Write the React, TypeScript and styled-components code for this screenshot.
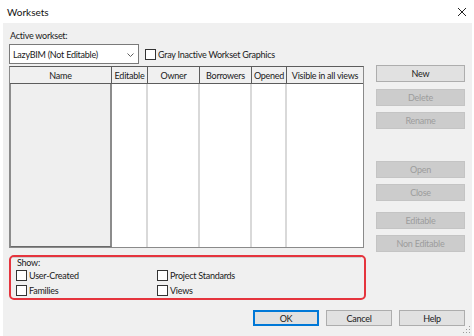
import styled, { createGlobalStyle } from "styled-components";

const GlobalStyle = createGlobalStyle`
  html, body {
    margin: 0;
    padding: 0;
    background: #ffffff;
  }
  body {
    font-family: Lato, "Noto Sans", sans-serif;
    font-size: 9px;
    letter-spacing: -0.25px;
    color: #1a1a1a;
  }
`;

const columns = [
  { title: "Name", width: 102 },
  { title: "Editable", width: 36 },
  { title: "Owner", width: 52 },
  { title: "Borrowers", width: 52 },
  { title: "Opened", width: 35 },
  { title: "Visible in all views", width: 76 },
];

const sideButtons = [
  { label: "New", disabled: false, space: 0 },
  { label: "Delete", disabled: true, space: 7 },
  { label: "Rename", disabled: true, space: 6 },
  { label: "Open", disabled: true, space: 32 },
  { label: "Close", disabled: true, space: 6 },
  { label: "Editable", disabled: true, space: 11 },
  { label: "Non Editable", disabled: true, space: 6 },
];

export default function App() {
  return (
    <>
      <GlobalStyle />
      <Window>
        <TitleBar>
          <Title>Worksets</Title>
          <svg width="10" height="10" viewBox="0 0 10 10">
            <path d="M1 1 L9 9 M9 1 L1 9" stroke="#222" strokeWidth="1" fill="none" />
          </svg>
        </TitleBar>
        <Body>
          <Top>
            <LeftCol>
              <Label>Active workset:</Label>
              <ComboRow>
                <Combo>
                  <span>LazyBIM (Not Editable)</span>
                  <svg width="7" height="5" viewBox="0 0 7 5">
                    <path d="M0.5 0.5 L3.5 3.5 L6.5 0.5" stroke="#606060" strokeWidth="1" fill="none" />
                  </svg>
                </Combo>
                <Check>
                  <Box />
                  Gray Inactive Workset Graphics
                </Check>
              </ComboRow>
              <Table>
                {columns.map((c, i) => (
                  <HeadCell key={c.title} $last={i === columns.length - 1}>
                    {c.title}
                  </HeadCell>
                ))}
                {columns.map((c, i) => (
                  <BodyCell key={c.title} $name={i === 0} $last={i === columns.length - 1} />
                ))}
              </Table>
              <ShowGroup>
                <GroupInner>
                  <GroupLabel>Show:</GroupLabel>
                  <CheckGrid>
                    <Check><Box />User-Created</Check>
                    <Check><Box />Project Standards</Check>
                    <Check><Box />Families</Check>
                    <Check><Box />Views</Check>
                  </CheckGrid>
                </GroupInner>
              </ShowGroup>
            </LeftCol>
            <ButtonCol>
              {sideButtons.map((b) => (
                <SideButton key={b.label} $disabled={b.disabled} $space={b.space}>
                  {b.label}
                </SideButton>
              ))}
            </ButtonCol>
          </Top>
          <Footer>
            <FooterButton $primary>OK</FooterButton>
            <FooterButton>Cancel</FooterButton>
            <FooterButton>Help</FooterButton>
          </Footer>
          <Grip width="8" height="8" viewBox="0 0 8 8">
            <rect x="6" y="0" width="1" height="1" fill="#9a9a9a" />
            <rect x="3" y="3" width="1" height="1" fill="#9a9a9a" />
            <rect x="6" y="3" width="1" height="1" fill="#9a9a9a" />
            <rect x="0" y="6" width="1" height="1" fill="#9a9a9a" />
            <rect x="3" y="6" width="1" height="1" fill="#9a9a9a" />
            <rect x="6" y="6" width="1" height="1" fill="#9a9a9a" />
          </Grip>
        </Body>
      </Window>
    </>
  );
}

const Window = styled.div`
  width: 474px;
  height: 336px;
  background: #ffffff;
  display: flex;
  flex-direction: column;
  overflow: hidden;
`;

const TitleBar = styled.div`
  height: 23px;
  display: flex;
  align-items: center;
  justify-content: space-between;
  padding: 0 7px 0 7px;
  box-sizing: border-box;
`;

const Title = styled.span`
  font-size: 10px;
  letter-spacing: 0;
  color: #111;
`;

const Body = styled.div`
  position: relative;
  flex: 1;
  margin: 0 2px 0 3px;
  background: #f0f0f0;
  padding: 6px 7px 0 6px;
  display: flex;
  flex-direction: column;
`;

const Top = styled.div`
  display: flex;
  align-items: flex-start;
  gap: 10px;
`;

const LeftCol = styled.div`
  width: 357px;
  display: flex;
  flex-direction: column;
`;

const Label = styled.div`
  height: 14px;
  line-height: 14px;
  padding-left: 1px;
`;

const ComboRow = styled.div`
  margin-top: 1px;
  display: flex;
  align-items: center;
  gap: 6px;
`;

const Combo = styled.div`
  width: 130px;
  height: 20px;
  box-sizing: border-box;
  border: 1px solid #7a7a7a;
  background: #ffffff;
  display: flex;
  align-items: center;
  justify-content: space-between;
  padding: 0 4px 0 3px;
  svg {
    margin-top: 2px;
  }
`;

const Check = styled.label`
  display: flex;
  align-items: center;
  gap: 2px;
  white-space: nowrap;
`;

const Box = styled.span`
  width: 11px;
  height: 11px;
  box-sizing: border-box;
  border: 1px solid #333333;
  background: #ffffff;
  flex: none;
`;

const Table = styled.div`
  margin-top: 2px;
  width: 355px;
  height: 182px;
  box-sizing: border-box;
  border: 1px solid #8a8a8a;
  border-top-color: #5c5c5c;
  background: #ffffff;
  display: grid;
  grid-template-columns: ${columns.map((c) => `${c.width}px`).join(" ")};
  grid-template-rows: 17px 1fr;
`;

const HeadCell = styled.div<{ $last?: boolean }>`
  box-sizing: border-box;
  border-right: ${(p) => (p.$last ? "none" : "1px solid #5c5c5c")};
  border-bottom: 1px solid #5c5c5c;
  background: #f0f0f0;
  display: flex;
  align-items: center;
  justify-content: center;
  white-space: nowrap;
  overflow: hidden;
`;

const BodyCell = styled.div<{ $name?: boolean; $last?: boolean }>`
  box-sizing: border-box;
  background: ${(p) => (p.$name ? "#efefef" : "#ffffff")};
  border-right: ${(p) =>
    p.$last ? "none" : p.$name ? "2px solid #8c8c8c" : "2px solid #d9d9d9"};
  border-left: ${(p) => (p.$name ? "1px solid #8c8c8c" : "none")};
  border-bottom: ${(p) => (p.$name ? "1px solid #6a6a6a" : "none")};
`;

const ShowGroup = styled.div`
  margin-top: 7px;
  height: 45px;
  box-sizing: border-box;
  border: 2px solid #e5343d;
  border-radius: 5px;
  padding: 0 3px 0 2px;
`;

const GroupInner = styled.div`
  border-top: 1px solid #cfcfcf;
  padding-left: 3px;
`;

const GroupLabel = styled.div`
  height: 10px;
  line-height: 10px;
  padding-left: 1px;
`;

const CheckGrid = styled.div`
  display: grid;
  grid-template-columns: 141px 1fr;
  grid-auto-rows: 15px;
  align-items: center;
`;

const ButtonCol = styled.div`
  width: 89px;
  padding-top: 36px;
  display: flex;
  flex-direction: column;
`;

const SideButton = styled.div<{ $disabled?: boolean; $space: number }>`
  margin-top: ${(p) => p.$space}px;
  height: 17px;
  box-sizing: border-box;
  border: 1px solid ${(p) => (p.$disabled ? "#c4c4c4" : "#adadad")};
  background: ${(p) => (p.$disabled ? "#cccccc" : "#e1e1e1")};
  color: ${(p) => (p.$disabled ? "#9c9c9c" : "#1a1a1a")};
  display: flex;
  align-items: center;
  justify-content: center;
`;

const Footer = styled.div`
  margin-top: 10px;
  display: flex;
  justify-content: flex-end;
  gap: 7px;
`;

const FooterButton = styled.div<{ $primary?: boolean }>`
  width: 66px;
  height: 16px;
  box-sizing: border-box;
  border: 1px solid ${(p) => (p.$primary ? "#0078d7" : "#adadad")};
  box-shadow: ${(p) => (p.$primary ? "inset 0 0 0 1px #0078d7" : "none")};
  background: #e1e1e1;
  display: flex;
  align-items: center;
  justify-content: center;
`;

const Grip = styled.svg`
  position: absolute;
  right: 1px;
  bottom: 2px;
`;
